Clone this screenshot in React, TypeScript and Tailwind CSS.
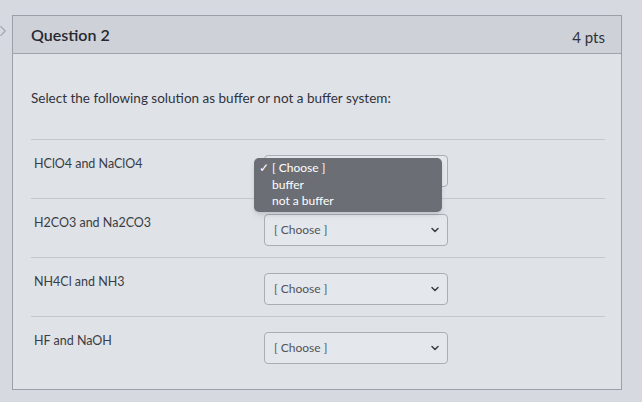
import { ChevronDown, ChevronRight } from 'lucide-react';

const rows = [
  { label: 'HClO4 and NaClO4', open: true },
  { label: 'H2CO3 and Na2CO3', open: false },
  { label: 'NH4Cl and NH3', open: false },
  { label: 'HF and NaOH', open: false },
];

function ChooseSelect({ open }: { open: boolean }) {
  return (
    <div className="relative mt-[15px] h-[32px] w-[184px]">
      <div className="flex h-full w-full items-center justify-between rounded-[4px] border border-[#a9adb5] bg-[#e4e7eb] pl-[9px] pr-[6px]">
        <span className="text-[12px] text-[#50535b]">[ Choose ]</span>
        <ChevronDown className="h-[12px] w-[12px] text-[#3a3d45]" strokeWidth={3} />
      </div>
      {open && (
        <div className="absolute left-[-10px] top-[3px] z-10 w-[188px] rounded-[5px] bg-[#6b6e74] py-[2px] text-[12px] leading-[16.5px] text-white shadow-md">
          <div className="flex items-center">
            <span className="w-[18px] pl-[5px] text-[12px]">✓</span>
            <span>[ Choose ]</span>
          </div>
          <div className="pl-[18px]">buffer</div>
          <div className="pl-[18px]">not a buffer</div>
        </div>
      )}
    </div>
  );
}

export default function App() {
  return (
    <div
      className="relative h-[402px] w-[642px] overflow-hidden bg-[#d6d9e0] text-[#2e313a]"
      style={{ fontFamily: 'Lato, "Open Sans", sans-serif' }}
    >
      <ChevronRight className="absolute left-[-6px] top-[22px] h-[18px] w-[18px] text-[#a4a8b0]" strokeWidth={1.5} />

      <div className="ml-[12px] mt-[15px] h-[375px] w-[610px] border border-[#9b9fa7] bg-[#dfe2e7]">
        {/* Header */}
        <div className="flex h-[38px] items-center justify-between border-b border-[#a0a4ac] bg-[#ced1d8] pl-[18px] pr-[16px]">
          <h3 className="text-[16px] font-semibold text-[#262932]">Question 2</h3>
          <span className="mt-[6px] text-[15px] text-[#2e313a]">4 pts</span>
        </div>

        {/* Body */}
        <div className="pl-[18px] pr-[16px]">
          <p className="pt-[34px] text-[13.5px] leading-[20px] text-[#30333b]">
            Select the following solution as buffer or not a buffer system:
          </p>

          <div className="mt-[31px]">
            {rows.map((row) => (
              <div key={row.label} className="flex h-[59px] border-t border-[#c4c8ce]">
                <div className="w-[233px] pl-[3px] pt-[15px] text-[12.5px] text-[#3a3d45]">{row.label}</div>
                <ChooseSelect open={row.open} />
              </div>
            ))}
          </div>
        </div>
      </div>
    </div>
  );
}
